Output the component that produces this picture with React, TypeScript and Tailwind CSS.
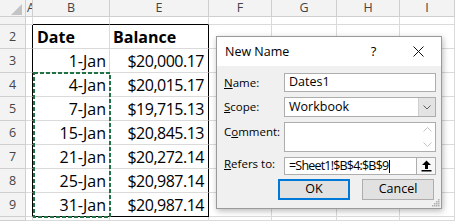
import React from 'react';

const dates = ['1-Jan', '4-Jan', '7-Jan', '15-Jan', '21-Jan', '25-Jan', '31-Jan'];
const balances = ['$20,000.17', '$20,015.17', '$19,715.13', '$20,845.13', '$20,272.14', '$20,987.14', '$20,987.14'];
const colLetters = ['', 'A', 'B', 'E', 'F', 'G', 'H', 'I'];
const rowNums = [0, 1, 2, 3, 4, 5, 6, 7, 8, 9, 10];

function Cell({ r, c }: { r: number; c: number }) {
  const isHeaderRow = r === 0;
  const isRowHeader = c === 0;
  let cls = 'flex items-center overflow-hidden whitespace-nowrap border-r border-b ';
  if (isHeaderRow || isRowHeader) {
    cls += 'bg-[#f3f3f3] border-[#cfcfcf] text-[#444] text-[12.5px] leading-[14px] ';
  } else {
    cls += 'bg-white border-[#dadada] text-black text-[16px] ';
  }
  if (c === 1 && r >= 2 && r <= 9) cls += 'border-r-black ';
  if (c === 3 && r >= 2 && r <= 9) cls += 'border-r-black ';
  if (r === 1 && (c === 2 || c === 3)) cls += 'border-b-black ';
  if (r === 9 && (c === 2 || c === 3)) cls += 'border-b-black ';

  let content: React.ReactNode = null;
  if (isHeaderRow && isRowHeader) {
    cls += 'justify-end items-end pr-[2px] pb-[1px] ';
    content = (
      <svg width="12" height="11" viewBox="0 0 12 11">
        <polygon points="11,0 11,11 0,11" fill="#c4c4c4" />
      </svg>
    );
  } else if (isHeaderRow) {
    if (c === 1) {
      cls += 'justify-start pl-[1px] ';
    } else {
      cls += 'justify-center ';
    }
    content = colLetters[c];
  } else if (isRowHeader) {
    cls += 'justify-center ';
    if (r >= 2 && r <= 9) content = String(r);
  } else if (c === 2) {
    if (r === 2) {
      cls += 'justify-start pl-[4px] font-bold ';
      content = 'Date';
    } else if (r >= 3 && r <= 9) {
      cls += 'justify-end pr-[3px] ';
      content = dates[r - 3];
    }
  } else if (c === 3) {
    if (r === 2) {
      cls += 'justify-start pl-[3px] font-bold ';
      content = 'Balance';
    } else if (r >= 3 && r <= 9) {
      cls += 'justify-end pr-[4px] tracking-[-0.5px] ';
      content = balances[r - 3];
    }
  }
  return <div className={cls}>{content}</div>;
}

function Dialog() {
  return (
    <div className="absolute left-[216px] top-[36px] w-[226px] h-[173px] border border-[#9a9a9a] bg-[#f0f0f0] shadow-[1px_2px_6px_rgba(0,0,0,0.28)] flex flex-col text-black">
      <div className="h-[29px] bg-white flex items-center">
        <div className="flex-1 pl-[8px] text-[12.5px] pt-[1px]">New Name</div>
        <div className="w-[45px] h-full flex items-center justify-center text-[13px]">?</div>
        <div className="w-[45px] h-full flex items-center justify-center">
          <svg width="11" height="11" viewBox="0 0 11 11">
            <path d="M0.5 0.5 L10.5 10.5 M10.5 0.5 L0.5 10.5" stroke="#111" strokeWidth="1" fill="none" />
          </svg>
        </div>
      </div>
      <div className="relative flex-1 flex flex-col gap-[5px] pt-[7px] pl-[7px] pr-[5px] text-[11.5px]">
        <div className="flex items-center h-[19px]">
          <div className="w-[60px]"><span className="underline">N</span>ame:</div>
          <div className="flex-1 h-full bg-white border border-[#adadad] flex items-center pl-[4px] text-[12.5px]">Dates1</div>
        </div>
        <div className="flex items-center h-[20px]">
          <div className="w-[60px]"><span className="underline">S</span>cope:</div>
          <div className="flex-1 h-full bg-white border border-[#adadad] flex items-stretch text-[12.5px]">
            <div className="flex-1 flex items-center pl-[4px]">Workbook</div>
            <div className="w-[17px] bg-[#e3e3e3] border-l border-[#cfcfcf] flex items-center justify-center">
              <svg width="8" height="5" viewBox="0 0 8 5">
                <path d="M0.5 0.5 L4 4 L7.5 0.5" stroke="#606060" strokeWidth="1" fill="none" />
              </svg>
            </div>
          </div>
        </div>
        <div className="flex items-start h-[30px]">
          <div className="w-[60px] pt-[1px]">C<span className="underline">o</span>mment:</div>
          <div className="flex-1 h-full bg-white border border-[#adadad] flex">
            <div className="flex-1" />
            <div className="w-[15px] flex flex-col items-center justify-between py-[4px]">
              <svg width="9" height="5" viewBox="0 0 9 5">
                <path d="M0.5 4.5 L4.5 0.5 L8.5 4.5" stroke="#c2c2c2" strokeWidth="1" fill="none" />
              </svg>
              <svg width="9" height="5" viewBox="0 0 9 5">
                <path d="M0.5 0.5 L4.5 4.5 L8.5 0.5" stroke="#c2c2c2" strokeWidth="1" fill="none" />
              </svg>
            </div>
          </div>
        </div>
        <div className="flex items-center h-[18px]">
          <div className="w-[60px] -mt-[4px]"><span className="underline">R</span>efers to:</div>
          <div className="flex-1 h-full bg-white border border-[#adadad] flex items-center pl-[4px] text-[12.5px] tracking-[-0.8px]">
            =Sheet1!$B$4:$B$9<span className="inline-block w-px h-[13px] bg-black ml-[1px]" />
          </div>
          <div className="w-[19px] h-full bg-[#f7f7f7] border border-[#adadad] border-l-0 flex items-center justify-center">
            <svg width="11" height="12" viewBox="0 0 11 12">
              <path d="M5.5 0.5 L10 5 L7 5 L7 9 L4 9 L4 5 L1 5 Z" fill="#000" />
              <rect x="0.5" y="10" width="10" height="1.5" fill="#000" />
            </svg>
          </div>
        </div>
        <div className="flex justify-end gap-[12px] pr-[2px] mt-[-1px]">
          <div className="w-[72px] h-[21px] bg-[#e1e1e1] border-2 border-[#0078d7] flex items-center justify-center text-[12.5px]">OK</div>
          <div className="w-[72px] h-[21px] bg-[#e1e1e1] border border-[#adadad] flex items-center justify-center text-[12.5px]">Cancel</div>
        </div>
        <svg className="absolute right-[1px] bottom-[1px]" width="10" height="10" viewBox="0 0 10 10">
          <g fill="#b0b0b0">
            <rect x="8" y="2" width="1.5" height="1.5" />
            <rect x="6" y="4" width="1.5" height="1.5" />
            <rect x="8" y="4" width="1.5" height="1.5" />
            <rect x="4" y="6" width="1.5" height="1.5" />
            <rect x="6" y="6" width="1.5" height="1.5" />
            <rect x="8" y="6" width="1.5" height="1.5" />
            <rect x="2" y="8" width="1.5" height="1.5" />
            <rect x="4" y="8" width="1.5" height="1.5" />
            <rect x="6" y="8" width="1.5" height="1.5" />
            <rect x="8" y="8" width="1.5" height="1.5" />
          </g>
        </svg>
      </div>
    </div>
  );
}

export default function App() {
  return (
    <div className="relative w-[455px] h-[221px] overflow-hidden bg-white font-['Open_Sans','Noto_Sans',sans-serif]">
      <div className="grid grid-cols-[26px_7px_77px_99px_63px_65px_63px_1fr] grid-rows-[17px_8px_repeat(8,24px)_1fr] w-full h-full">
        {rowNums.map((r) =>
          colLetters.map((_, c) => <Cell key={`${r}-${c}`} r={r} c={c} />)
        )}
      </div>
      <svg className="absolute left-[33px] top-[72px]" width="78" height="146" viewBox="0 0 78 146">
        <rect x="1" y="1" width="76" height="144" fill="none" stroke="#217346" strokeWidth="2" strokeDasharray="4 2" />
      </svg>
      <Dialog />
    </div>
  );
}
